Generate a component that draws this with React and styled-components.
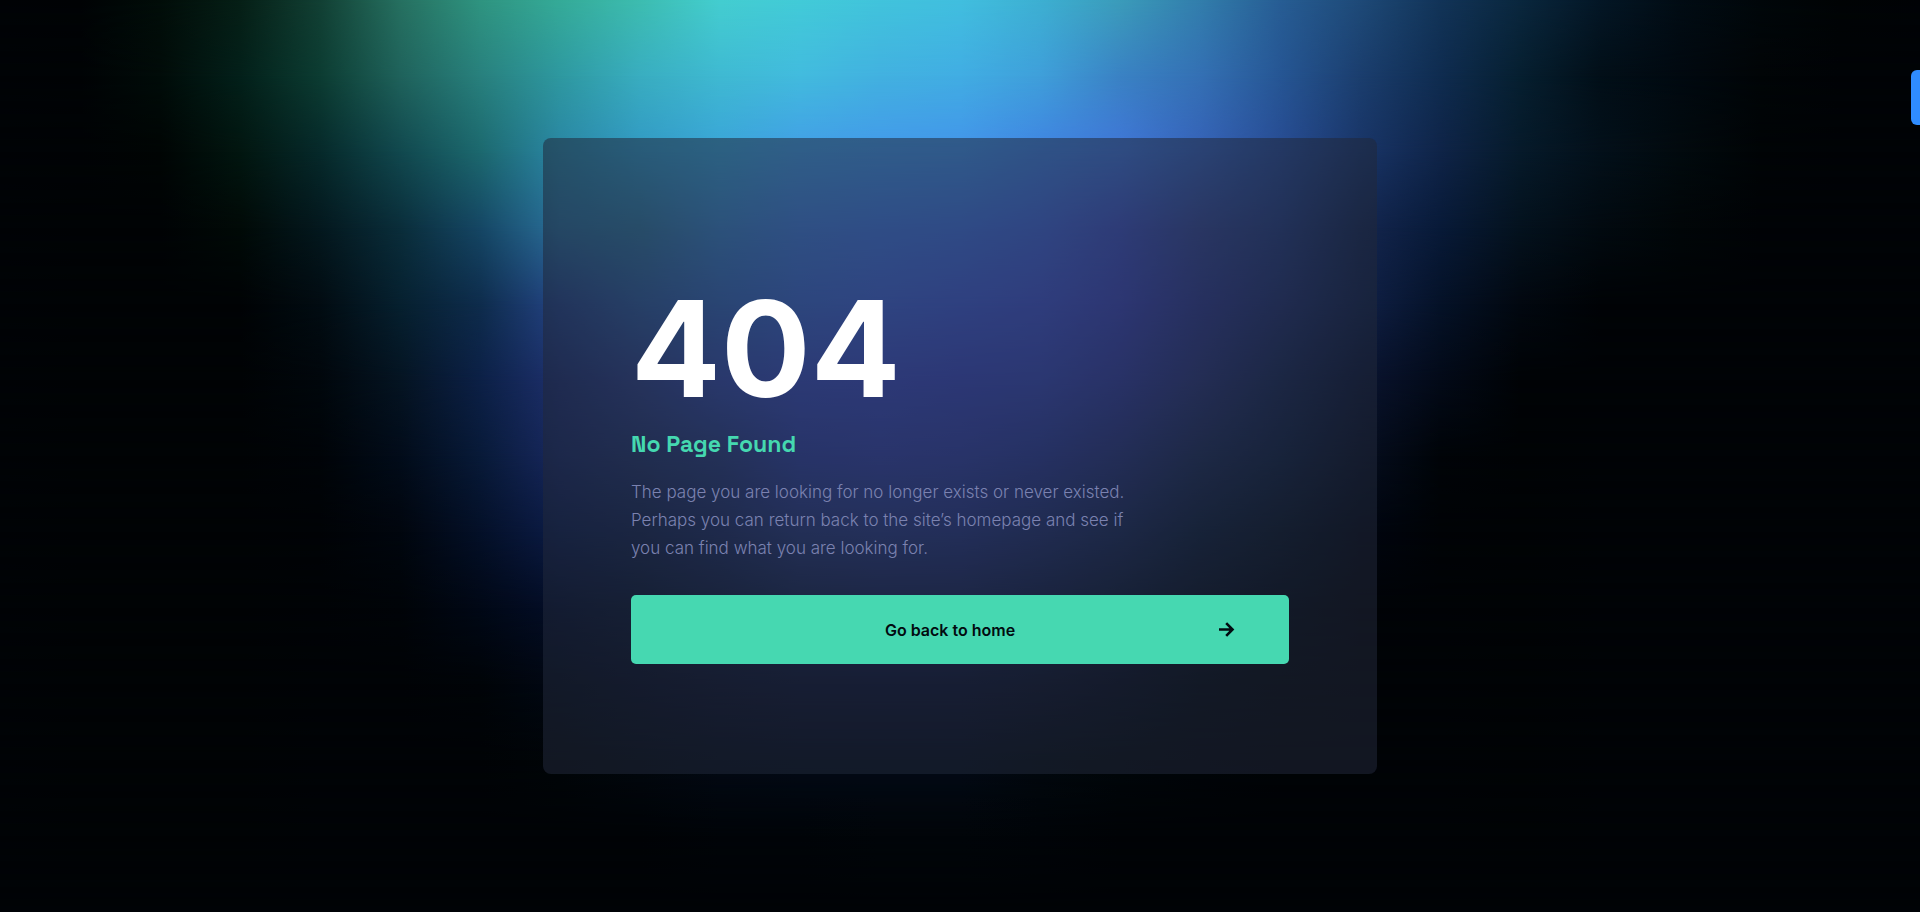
import styled, { createGlobalStyle } from 'styled-components'

// northern lights backdrop: every row is a left to right gradient,
// and each row fades into the one under it
const ROWS = [
  '000306 000305 020d09 061f16 124034 267060 2f9480 35ab98 3dbdb0 44ced0 42cbd8 41c4dc 41bfdf 3db0d2 3b9cba 327eac 275d94 1e4a78 123458 0a273e 041726 020c14 01070a 000405 000306',
  '000306 000305 010c09 03201a 0c3c32 1f625b 28807d 2e98a0 39adc0 3fb9d2 42bbde 42b1e0 41ade3 3f9fda 3a82c4 3470b4 265694 1b3e6e 0f2c50 061f30 020f18 010910 010507 000306 000306',
  '000306 000305 000504 021610 06292a 11484e 1c686e 2a86a4 3299c4 3aa4d8 429ee6 4399ea 4394ea 4084e2 4076d8 3662b8 284c94 193568 0f2448 061a2a 03101a 020a0e 000406 000306 000306',
  '000306 000305 000305 010a07 04181e 0a2d3a 154664 2a6e98 3078a0 3a84c8 407fdc 427ae2 4274e0 4268d8 3e54c0 344894 243c7c 14264f 081a38 04121e 020a10 010608 000306 000306 000306',
  '000306 000305 000305 000305 020c12 06202f 0e2c4c 244484 2e5c9c 3468b8 3c6ace 4066d6 405ed4 4056cc 3c48b6 2e3a8c 20306a 102046 051228 020810 000306 000306 000306 000306 000306',
  '000306 000305 000305 000305 01070c 051422 0c2046 1e306c 2c4084 344ca8 3a50bc 3c4ec0 3a4abc 384ab4 323e9c 283474 162650 0a1430 030a18 000306 000306 000306 000306 000306 000306',
  '000306 000305 000305 000305 000408 020c1a 081a38 18285e 223468 283c7c 3042a0 3444a6 3242a2 2c3c94 263478 1a2a54 0e1e3c 060e20 000408 000305 000306 000306 000306 000306 000306',
  '000306 000305 000305 000305 000306 01060e 041028 0c1c46 14244c 1c2c60 263878 283a80 26367e 20306c 182854 0c1c36 061222 000510 000306 000305 000306 000306 000306 000306 000306',
  '000306 000305 000305 000305 000306 000408 010816 040e28 0a162e 101e3c 16244a 182450 182450 121e42 0c1830 060f1e 020812 000307 000306 000305 000306 000306 000306 000306 000306',
  '000306 000305 000305 000305 000306 000306 000408 020814 060c1e 0a1026 0c122c 0c122e 0c122c 0a1024 060b1a 02070e 000508 000306 000306 000305 000306 000306 000306 000306 000306',
  '000306 000305 000305 000305 000306 000306 000306 010508 02070e 030914 030a16 030a16 030a16 02080e 01060a 000408 000306 000306 000306 000305 000306 000306 000306 000306 000306',
  '000306 000305 000305 000305 000306 000306 000306 000306 000306 000408 000408 010509 010509 000408 000306 000306 000306 000306 000306 000305 000306 000306 000306 000306 000306',
  '000306 000306',
]

const toGradient = (row) => row.split(' ').map((c) => `#${c}`).join(', ')
const toStop = (i) => `${(i * 100) / (ROWS.length - 1)}%`

function App ()
{
  return (
    <Page>
      <GlobalStyle />
      <Backdrop aria-hidden='true'>
        { ROWS.map((row, i) => (
          <Band key={ i } $index={ i } $row={ row } />
        )) }
      </Backdrop>

      <Card>
        <Code>404</Code>
        <Title>No Page Found</Title>
        <Text>
          The page you are looking for no longer exists or never existed.
          Perhaps you can return back to the site’s homepage and see if
          you can find what you are looking for.
        </Text>
        <HomeLink href='/'>
          <Label>Go back to home</Label>
          <Arrow viewBox='0 0 20 20' aria-hidden='true'>
            <path d='M2 9.5H15.5M9.2 3.2L15.5 9.5L9.2 15.8' />
          </Arrow>
        </HomeLink>
      </Card>

      <SideTab type='button' aria-label='Open panel' />
    </Page>
  )
}

const GlobalStyle = createGlobalStyle`
  * {
    box-sizing: border-box;
  }

  body {
    margin: 0;
    background: #000306;
    font-family: Inter, sans-serif;
  }
`

const Page = styled.main`
  position: relative;
  display: flex;
  align-items: center;
  justify-content: center;
  min-height: 100vh;
  padding: 24px;
  overflow: hidden;
`

const Backdrop = styled.div`
  position: absolute;
  inset: 0;
`

const Band = styled.div`
  position: absolute;
  inset: 0;
  background: linear-gradient(to right, ${({ $row }) => toGradient($row)});
  mask-image: ${({ $index }) => $index === 0
    ? 'none'
    : `linear-gradient(transparent ${toStop($index - 1)}, #000 ${toStop($index)})`};
`

const Card = styled.section`
  position: relative;
  display: flex;
  flex-direction: column;
  width: 100%;
  max-width: 834px;
  padding: 132px 88px 110px;
  border-radius: 8px;
  background: rgba(33, 40, 58, 0.55);

  @media only screen and (max-width: 600px) {
    padding: 48px 24px;
  }
`

const Code = styled.h1`
  margin: 0;
  color: #fff;
  font-size: 133px;
  font-weight: 700;
  line-height: 158px;
`

const Title = styled.h2`
  margin: 0 0 18px;
  color: #45d8b0;
  font-family: 'Space Grotesk', Inter, sans-serif;
  font-size: 23px;
  font-weight: 600;
  line-height: 32px;
`

const Text = styled.p`
  max-width: 500px;
  margin: 0 0 33px;
  color: #7b82b0;
  font-size: 17px;
  font-weight: 300;
  line-height: 28px;
`

const HomeLink = styled.a`
  display: flex;
  align-items: center;
  height: 69px;
  padding: 0 52px;
  border-radius: 5px;
  background: #46d8b1;
  color: #020b10;
  font-size: 16px;
  font-weight: 600;
  line-height: 20px;
  text-decoration: none;
`

const Label = styled.span`
  flex: 1;
  text-align: center;
`

const Arrow = styled.svg`
  width: 20px;
  height: 20px;
  fill: none;
  stroke: currentColor;
  stroke-width: 2.6;
`

const SideTab = styled.button`
  position: absolute;
  top: 70px;
  right: 0;
  width: 9px;
  height: 55px;
  padding: 0;
  border: 0;
  border-radius: 6px 0 0 6px;
  background: #2f8cff;
  cursor: pointer;
`

export default App
